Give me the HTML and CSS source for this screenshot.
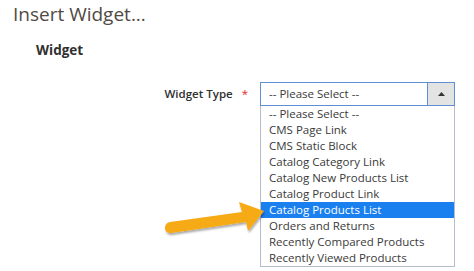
FILE: index.html
```html
<!DOCTYPE html>
<html lang="en">
<head>
    <meta charset="UTF-8">
    <title>Insert Widget</title>
    <link rel="stylesheet" href="styles.css">
</head>
<body>
    <h1 class="page-title">Insert Widget...</h1>
    <h2 class="section-title">Widget</h2>
    <div class="field">
        <label class="field-label">Widget Type <span class="required">*</span></label>
        <div class="field-control">
            <div class="select-box">
                <span class="select-value">-- Please Select --</span>
                <span class="select-toggle">
                    <svg width="7" height="4" viewBox="0 0 7 4"><polygon points="0,4 3.5,0 7,4" fill="#333"/></svg>
                </span>
            </div>
            <ul class="options">
                <li>-- Please Select --</li>
                <li>CMS Page Link</li>
                <li>CMS Static Block</li>
                <li>Catalog Category Link</li>
                <li>Catalog New Products List</li>
                <li>Catalog Product Link</li>
                <li class="selected">Catalog Products List</li>
                <li>Orders and Returns</li>
                <li>Recently Compared Products</li>
                <li>Recently Viewed Products</li>
            </ul>
        </div>
    </div>

    <!-- callout arrow sits over the page -->
    <svg class="callout" width="120" height="50" viewBox="0 0 120 50">
        <defs>
            <filter id="shade" x="-10%" y="-10%" width="130%" height="140%">
                <feDropShadow dx="1" dy="2" stdDeviation="1.2" flood-color="#000" flood-opacity="0.35"/>
            </filter>
        </defs>
        <path filter="url(#shade)" fill="#f6aa14"
            d="M8,32 L80,22 L77,12 L102,21 L86,41 L84,32 L9,43 Q3,43 3,38 Q3,33 8,32 Z"/>
    </svg>
</body>
</html>
```

FILE: styles.css
```css
body {
    margin: 0;
    font-family: "Open Sans", Arial, sans-serif;
    color: #41362f;
    background: #fff;
    position: relative;
    width: 474px;
    height: 271px;
    overflow: hidden;
}

.page-title {
    margin: 0;
    padding: 1px 0 0 13px;
    font-size: 19px;
    font-weight: 400;
    line-height: 26px;
    color: #514943;
}

.section-title {
    margin: 0;
    padding: 13px 0 0 36px;
    font-size: 13.5px;
    font-weight: 700;
    line-height: 20px;
    color: #303030;
}

.field {
    display: flex;
    margin-top: 22px;
}

.field-label {
    width: 260px;
    padding-top: 4px;
    padding-right: 12px;
    box-sizing: border-box;
    text-align: right;
    font-size: 11.5px;
    font-weight: 600;
    color: #303030;
}

.required {
    color: #e22626;
    font-weight: 400;
    margin-left: 6px;
}

.field-control {
    width: 195px;
}

.select-box {
    display: flex;
    height: 24px;
    border: 1px solid #5f8fd3;
    box-sizing: border-box;
    font-size: 11.5px;
    color: #3a3a3a;
}

.select-value {
    flex: 1;
    padding: 3px 0 0 8px;
}

.select-toggle {
    width: 26px;
    border-left: 1px solid #5f8fd3;
    background: #e3e3e3;
    display: flex;
    align-items: center;
    justify-content: center;
}

.options {
    list-style: none;
    margin: 0;
    padding: 0;
    border: 1px solid #b7bccb;
    border-top: none;
    font-size: 11.5px;
    color: #3a3a3a;
}

.options li {
    height: 16px;
    line-height: 16px;
    padding-left: 8px;
}

.options .selected {
    background: #1a80f0;
    color: #fff;
}

.callout {
    position: absolute;
    left: 162px;
    top: 190px;
}
```
